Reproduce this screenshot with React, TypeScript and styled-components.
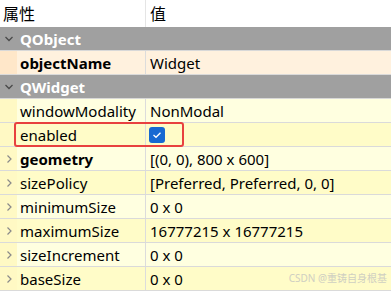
import React from 'react';
import styled, { createGlobalStyle } from 'styled-components';

const GlobalStyle = createGlobalStyle`
  html, body { margin: 0; padding: 0; background: #ffffff; }
  body { font-family: "Noto Sans", "Noto Sans CJK SC", sans-serif; }
`;

const Sheet = styled.div`
  position: relative;
  width: 391px;
  height: 291px;
  overflow: hidden;
  background: #ffffff;
  font-size: 15px;
  color: #000000;
`;

const Header = styled.div`
  display: flex;
  height: 27px;
  align-items: stretch;
  font-family: "Noto Sans CJK SC", sans-serif;
  font-size: 16px;
`;

const HeadCell = styled.div<{ $w?: number }>`
  display: flex;
  align-items: center;
  padding-left: ${p => (p.$w ? 3 : 4)}px;
  width: ${p => (p.$w ? `${p.$w}px` : 'auto')};
  flex: ${p => (p.$w ? 'none' : 1)};
  border-right: ${p => (p.$w ? '1px solid #e5e5e5' : 'none')};
  box-sizing: border-box;
  padding-bottom: 2px;
`;

const GroupRow = styled.div`
  display: flex;
  align-items: center;
  height: 23px;
  background: #a0a0a0;
  border-bottom: 1px solid #d8d8d8;
  color: #ffffff;
  font-weight: 700;
`;

const Gutter = styled.div<{ $bg: string }>`
  width: 17px;
  height: 100%;
  flex: none;
  display: flex;
  align-items: center;
  justify-content: center;
  background: ${p => p.$bg};
`;

const GroupLabel = styled.span`
  padding-left: 3px;
`;

const Row = styled.div<{ $bg: string }>`
  position: relative;
  display: flex;
  align-items: stretch;
  height: 23px;
  background: ${p => p.$bg};
  border-bottom: 1px solid #dadada;
`;

const NameCell = styled.div<{ $bold?: boolean }>`
  width: 129px;
  flex: none;
  box-sizing: border-box;
  display: flex;
  align-items: center;
  padding-left: 3px;
  border-right: 1px solid #dcdcdc;
  font-weight: ${p => (p.$bold ? 700 : 400)};
  white-space: nowrap;
`;

const ValueCell = styled.div`
  flex: 1;
  display: flex;
  align-items: center;
  padding-left: 4px;
  white-space: nowrap;
`;

const Highlight = styled.div`
  position: absolute;
  left: 14px;
  top: -1px;
  width: 170px;
  height: 25px;
  box-sizing: border-box;
  border: 2px solid #e8413f;
  border-radius: 3px;
  pointer-events: none;
`;

const Check = styled.span`
  width: 16px;
  height: 16px;
  margin-left: -1px;
  border-radius: 3px;
  background: #1769d2;
  display: inline-flex;
  align-items: center;
  justify-content: center;
`;

const Watermark = styled.div`
  position: absolute;
  right: 4px;
  bottom: 6px;
  font-size: 10px;
  color: #cfcfc2;
  font-family: "Noto Sans", "Noto Sans CJK SC", sans-serif;
`;

const Chevron = ({ down, color }: { down?: boolean; color: string }) => (
  <svg width="8" height="10" viewBox="0 0 8 10">
    {down ? (
      <path d="M0.5 3 L4 6.5 L7.5 3" fill="none" stroke={color} strokeWidth="1.3" />
    ) : (
      <path d="M2.5 1.5 L6 5 L2.5 8.5" fill="none" stroke={color} strokeWidth="1.2" />
    )}
  </svg>
);

type Prop = { name: string; value?: string; bold?: boolean; expand?: boolean; check?: boolean; mark?: boolean };

const OBJ_GUTTER = '#ffe7c9';
const OBJ_BG = '#fff1de';
const W_GUTTER = '#fff9c4';
const W_LIGHT = '#ffffe0';
const W_DARK = '#fffcc8';

const widgetProps: Prop[] = [
  { name: 'windowModality', value: 'NonModal' },
  { name: 'enabled', check: true, mark: true },
  { name: 'geometry', value: '[(0, 0), 800 x 600]', bold: true, expand: true },
  { name: 'sizePolicy', value: '[Preferred, Preferred, 0, 0]', expand: true },
  { name: 'minimumSize', value: '0 x 0', expand: true },
  { name: 'maximumSize', value: '16777215 x 16777215', expand: true },
  { name: 'sizeIncrement', value: '0 x 0', expand: true },
  { name: 'baseSize', value: '0 x 0', expand: true },
];

export default function App() {
  return (
    <Sheet>
      <GlobalStyle />
      <Header>
        <HeadCell $w={146}>属性</HeadCell>
        <HeadCell>值</HeadCell>
      </Header>

      <GroupRow>
        <Gutter $bg="#a0a0a0"><Chevron down color="#4a4a4a" /></Gutter>
        <GroupLabel>QObject</GroupLabel>
      </GroupRow>
      <Row $bg={OBJ_BG}>
        <Gutter $bg={OBJ_GUTTER} />
        <NameCell $bold>objectName</NameCell>
        <ValueCell>Widget</ValueCell>
      </Row>

      <GroupRow>
        <Gutter $bg="#a0a0a0"><Chevron down color="#4a4a4a" /></Gutter>
        <GroupLabel>QWidget</GroupLabel>
      </GroupRow>
      {widgetProps.map((p, i) => (
        <Row key={p.name} $bg={i % 2 === 0 ? W_LIGHT : W_DARK}>
          <Gutter $bg={W_GUTTER}>{p.expand && <Chevron color="#8a8a8a" />}</Gutter>
          <NameCell $bold={p.bold}>{p.name}</NameCell>
          <ValueCell>
            {p.check ? (
              <Check>
                <svg width="10" height="8" viewBox="0 0 10 8">
                  <path d="M1.5 4 L4 6.3 L8.5 1.7" fill="none" stroke="#ffffff" strokeWidth="1.3" />
                </svg>
              </Check>
            ) : (
              p.value
            )}
          </ValueCell>
          {p.mark && <Highlight />}
        </Row>
      ))}

      <Watermark>CSDN @重铸自身根基</Watermark>
    </Sheet>
  );
}
